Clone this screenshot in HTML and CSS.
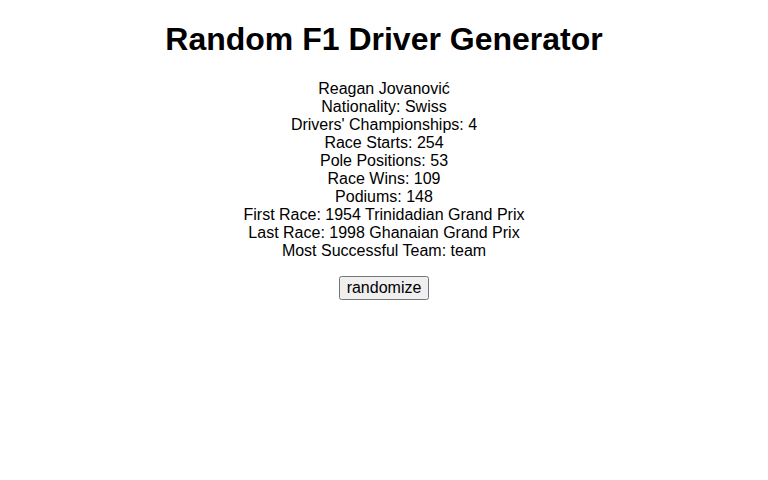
FILE: index.html
```html
<!DOCTYPE html>
<html lang="en">
<head>
  <meta charset="UTF-8">
  <meta name="viewport" content="width=device-width, initial-scale=1.0">
  <title>Random F1 Driver Generator</title>
  <link rel="stylesheet" href="styles.css">
</head>
<body>
  <h1>Random F1 Driver Generator</h1>
  <div class="driver" id="driver">
    <div id="name">Reagan Jovanović</div>
    <div id="nationality">Nationality: Swiss</div>
    <div id="titles">Drivers' Championships: 4</div>
    <div id="starts">Race Starts: 254</div>
    <div id="poles">Pole Positions: 53</div>
    <div id="wins">Race Wins: 109</div>
    <div id="podiums">Podiums: 148</div>
    <div id="first">First Race: 1954 Trinidadian Grand Prix</div>
    <div id="last">Last Race: 1998 Ghanaian Grand Prix</div>
    <div id="team">Most Successful Team: team</div>
  </div>
  <p class="actions">
    <button id="randomize">randomize</button>
  </p>
</body>
</html>
```

FILE: styles.css
```css
body {
  margin: 0;
  font-family: 'Liberation Sans', Arial, sans-serif;
  text-align: center;
  color: #000;
  background: #fff;
}
h1 {
  font-size: 32px;
  margin: 21.44px 0;
}
.driver {
  font-size: 16px;
  line-height: 18px;
}
.actions {
  margin: 16px 0;
}
button {
  font-family: 'Liberation Sans', Arial, sans-serif;
  font-size: 16px;
}
```
